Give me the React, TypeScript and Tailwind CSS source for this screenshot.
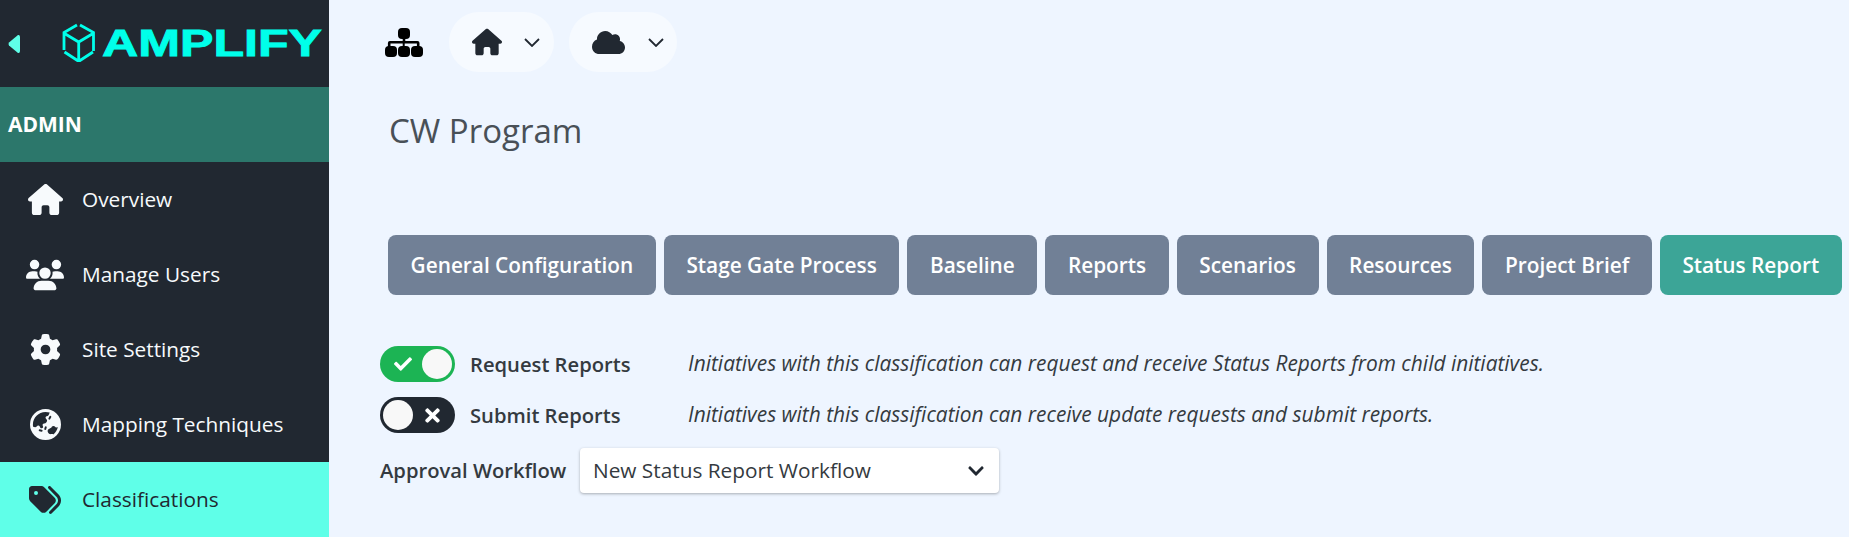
import { FaCheck, FaChevronDown, FaTimes } from 'react-icons/fa';
import { FaCloud, FaEarthAsia, FaGear, FaHouse, FaTags, FaUsers } from 'react-icons/fa6';
import type { ComponentType } from 'react';

const NAV: { label: string; icon: ComponentType<{ className?: string }>; iconClass: string; active?: boolean }[] = [
  { label: 'Overview', icon: FaHouse, iconClass: 'text-[35px]' },
  { label: 'Manage Users', icon: FaUsers, iconClass: 'text-[38px]' },
  { label: 'Site Settings', icon: FaGear, iconClass: 'text-[31px]' },
  { label: 'Mapping Techniques', icon: FaEarthAsia, iconClass: 'text-[31px]' },
  { label: 'Classifications', icon: FaTags, iconClass: 'text-[32px]', active: true },
];

const TABS = [
  'General Configuration',
  'Stage Gate Process',
  'Baseline',
  'Reports',
  'Scenarios',
  'Resources',
  'Project Brief',
  'Status Report',
];

function Logo() {
  return (
    <svg width="272" height="42" viewBox="0 0 272 42" className="block shrink-0">
      <path
        fill="none"
        stroke="#00ffea"
        strokeWidth="2.8"
        d="M11 12 L11 9.5 L24 2 M27 2 L40.5 9.5 L40.5 28 M40 29 L27 37.5 L24.5 37.5 L11.5 29 M11 27 L11 12 M11.5 10.5 L25.7 19 L40 10.5 M25.7 19 L25.7 36"
      />
      <text
        x="49"
        y="32.5"
        fill="#00ffea"
        stroke="#00ffea"
        strokeWidth="0.8"
        fontFamily="'Liberation Sans', sans-serif"
        fontWeight="700"
        fontSize="36"
        textLength="220"
        lengthAdjust="spacingAndGlyphs"
      >
        AMPLIFY
      </text>
    </svg>
  );
}

function Sidebar() {
  return (
    <aside className="w-[329px] shrink-0 bg-[#212831] flex flex-col overflow-hidden">
      <div className="h-[87px] flex items-center pl-2">
        <svg width="12" height="20" viewBox="0 0 12 20" className="mr-[33px] shrink-0">
          <path d="M10 1 Q12 0.5 12 3 L12 17 Q12 19.5 10 19 L1 11.5 Q0 10 1 8.5 Z" fill="#5fffe8" />
        </svg>
        <Logo />
      </div>
      <div className="h-[75px] bg-[#2c776b] flex items-center pl-2 text-white font-bold text-[21px]">ADMIN</div>
      {NAV.map((item) => (
        <div
          key={item.label}
          className={`h-[75px] flex items-center ${item.active ? 'bg-[#5fffe8] text-[#212831]' : 'text-[#f7fafc]'}`}
        >
          <span className="w-[38px] ml-[26px] mr-[18px] flex justify-center">
            <item.icon className={item.iconClass} />
          </span>
          <span className="text-[20.8px]">{item.label}</span>
        </div>
      ))}
    </aside>
  );
}

function Chevron() {
  return (
    <svg width="16" height="9" viewBox="0 0 16 9" fill="none" stroke="#212831" strokeWidth="1.8" className="shrink-0">
      <path d="M1 1 L8 8 L15 1" />
    </svg>
  );
}

function SitemapIcon() {
  return (
    <svg width="38" height="29" viewBox="0 0 38 29" fill="#000" className="mt-[16px] mr-[26px] shrink-0">
      <rect x="13" y="0" width="12" height="11" rx="4" />
      <rect x="0" y="18" width="12" height="11" rx="4" />
      <rect x="13" y="18" width="12" height="11" rx="4" />
      <rect x="26" y="18" width="12" height="11" rx="4" />
      <path d="M17.700 10 h2.600 v3 h12.200 q2 0 2 2 v4 h-2.600 v-3.500 h-12.200 v3.500 h-2 v-3.500 h-12.200 v3.500 h-2.600 v-4 q0 -2 2 -2 h12.800 z" />
    </svg>
  );
}

function Toggle({ on }: { on: boolean }) {
  return (
    <span
      className={`w-[75px] h-[36px] rounded-full p-[3px] flex items-center text-white shrink-0 ${
        on ? 'bg-[#1cb454] flex-row' : 'bg-[#212831] flex-row-reverse'
      }`}
    >
      <span className="flex-1 flex justify-center text-[18px]">
        {on ? <FaCheck /> : <FaTimes className="text-[21px]" />}
      </span>
      <span className="w-[30px] h-[30px] rounded-full bg-[#f8f8f8]" />
    </span>
  );
}

function Option({ on, label, help }: { on: boolean; label: string; help: string }) {
  return (
    <div className="h-[36px] flex items-center">
      <Toggle on={on} />
      <span className="w-[233px] pl-[15px] font-semibold text-[#343a40] text-[20.2px] whitespace-nowrap">{label}</span>
      <span className="italic text-[#343a40] text-[20.9px] whitespace-nowrap">{help}</span>
    </div>
  );
}

export default function App() {
  return (
    <div className="w-[1849px] h-[537px] overflow-hidden flex bg-[#eef5ff] font-['Open_Sans',sans-serif]">
      <Sidebar />
      <main className="flex-1 min-w-0 flex flex-col">
        <div className="h-[84px] pt-3 pl-[56px] flex items-start">
          <SitemapIcon />
          <div className="w-[105px] h-[60px] rounded-full bg-[#f6faff] pl-[23px] flex items-center gap-[22px] mr-[15px] text-[#212831]">
            <FaHouse className="text-[30px]" />
            <Chevron />
          </div>
          <div className="w-[108px] h-[60px] rounded-full bg-[#f6faff] pl-[23px] flex items-center gap-[23px] text-[#212831]">
            <FaCloud className="text-[33px]" />
            <Chevron />
          </div>
        </div>
        <h1 className="pl-[60px] h-[151px] pt-[23px] text-[33px] leading-[48px] text-[#495057]">CW Program</h1>
        <div className="pl-[59px] flex gap-2">
          {TABS.map((tab) => (
            <button
              key={tab}
              className={`h-[60px] px-[22.6px] pt-[1px] rounded-[8px] text-white font-semibold text-[20.8px] whitespace-nowrap ${
                tab === 'Status Report' ? 'bg-[#3ca597]' : 'bg-[#718096]'
              }`}
            >
              {tab}
            </button>
          ))}
        </div>
        <div className="pl-[51px] pt-[51px] flex flex-col gap-[15px]">
          <Option
            on
            label="Request Reports"
            help="Initiatives with this classification can request and receive Status Reports from child initiatives."
          />
          <Option
            on={false}
            label="Submit Reports"
            help="Initiatives with this classification can receive update requests and submit reports."
          />
          <div className="flex items-center">
            <span className="w-[200px] font-semibold text-[#343a40] text-[20.2px] whitespace-nowrap">Approval Workflow</span>
            <div className="w-[419px] h-[45px] rounded-[4px] bg-white shadow-[0_1px_3px_rgba(0,0,0,0.3)] pl-[13px] pr-[14px] flex items-center justify-between text-[#343a40] text-[20.8px]">
              New Status Report Workflow
              <FaChevronDown className="text-[18px] text-[#212831]" />
            </div>
          </div>
        </div>
      </main>
    </div>
  );
}
